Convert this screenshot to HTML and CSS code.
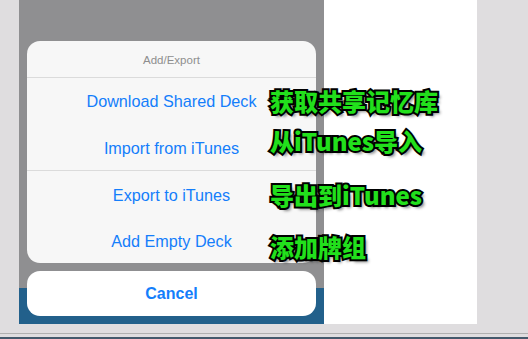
FILE: index.html
```html
<!DOCTYPE html>
<html lang="zh-CN">
<head>
  <meta charset="UTF-8">
  <meta name="viewport" content="width=device-width, initial-scale=1.0">
  <title>Add/Export</title>
  <link rel="stylesheet" href="styles.css">
</head>
<body>
  <div id="scena">
    <div class="margines"></div>
    <div id="telefon">
      <div class="arkusz">
        <div class="tytul">Add/Export</div>
        <button class="opcja">Download Shared Deck</button>
        <button class="opcja">Import from iTunes</button>
        <button class="opcja oddziel">Export to iTunes</button>
        <button class="opcja">Add Empty Deck</button>
      </div>
      <button class="anuluj">Cancel</button>
    </div>
    <div class="biale"></div>
    <div class="margines reszta"></div>

    <div id="podpisy">
      <p class="podpis p1">获取共享记忆库</p>
      <p class="podpis p2">从iTunes导入</p>
      <p class="podpis p3">导出到iTunes</p>
      <p class="podpis p4">添加牌组</p>
    </div>
  </div>
  <div id="stopka"></div>
</body>
</html>
```

FILE: styles.css
```css
:root {
  --szary-tlo: #dfdddf;
  --niebieski-ios: #147efb;
  --zielony: #22e01c;
}
* { box-sizing: border-box; }
body {
  margin: 0;
  background: var(--szary-tlo);
  font-family: "Liberation Sans", Arial, sans-serif;
  height: 339px;
  overflow: hidden;
}
#scena {
  position: relative;
  display: flex;
  height: 324px;
}
.margines { width: 19px; }
.reszta { flex: 1; }
.biale {
  width: 153px;
  background: white;
}
#telefon {
  width: 305px;
  display: flex;
  flex-direction: column;
  gap: 8px;
  padding: 41px 8px 8px;
  background: linear-gradient(#8f8f91 0, #8f8f91 288px, #22608b 288px);
}
.arkusz {
  background: #f7f7f7;
  border-radius: 13px;
  display: flex;
  flex-direction: column;
  overflow: hidden;
}
.tytul {
  height: 37px;
  border-bottom: 1px solid #dbdbdb;
  color: #8e8e8e;
  font-size: 11.5px;
  display: flex;
  align-items: center;
  justify-content: center;
  padding-top: 1px;
}
button {
  border: none;
  background: none;
  font-family: inherit;
  color: var(--niebieski-ios);
  padding: 0;
}
.opcja {
  height: 46px;
  font-size: 16.2px;
  padding-top: 2px;
}
.opcja:nth-of-type(1) { padding-top: 0; }
.oddziel {
  height: 47px;
  border-top: 1px solid #dbdbdb;
}
.anuluj {
  height: 45px;
  background: white;
  border-radius: 13px;
  font-size: 16px;
  font-weight: bold;
}

/* podpisy nad zrzutem */
#podpisy {
  position: absolute;
  left: 270px;
  top: 89px;
}
.podpis {
  margin: 0;
  font-family: "Noto Sans CJK SC", sans-serif;
  font-weight: 900;
  font-size: 24px;
  line-height: 24px;
  color: var(--zielony);
  -webkit-text-stroke: 4px black;
  paint-order: stroke fill;
  text-shadow: 3px 3px 3px rgba(0, 0, 0, .45);
  white-space: nowrap;
}
.p2 { margin-top: 16px; }
.p3 { margin-top: 30px; }
.p4 { margin-top: 28px; }

#stopka {
  height: 15px;
  border-top: 9px solid var(--szary-tlo);
  background: linear-gradient(#b0b0b0 0, #b0b0b0 1px, var(--szary-tlo) 1px, var(--szary-tlo) 4px, #44596b 4px);
}
```
